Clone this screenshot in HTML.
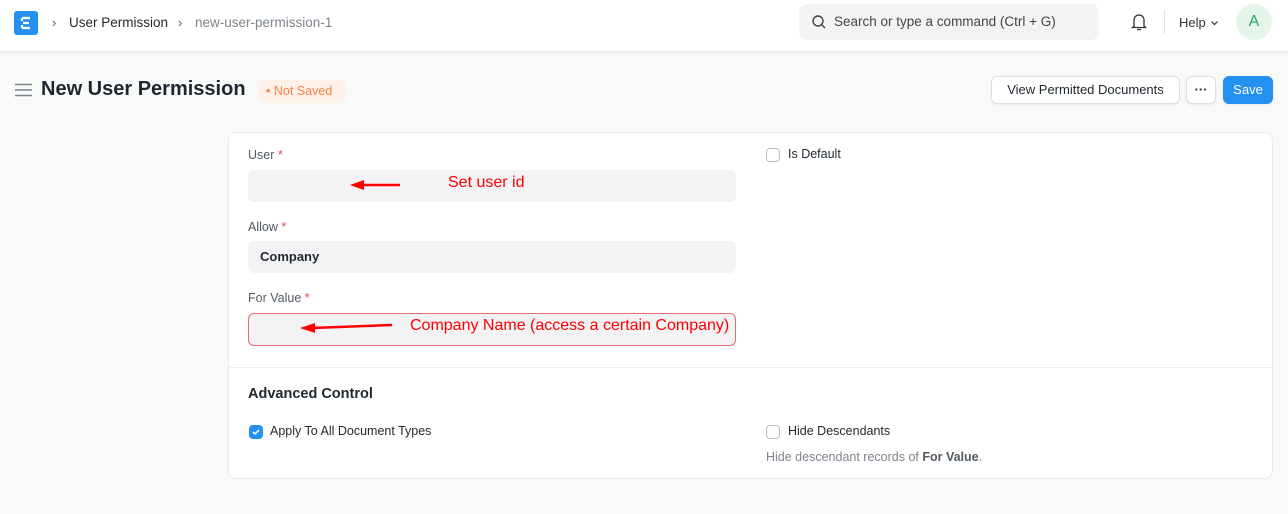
<!DOCTYPE html>
<html><head><style>
*{box-sizing:border-box;margin:0;padding:0}
body{width:1288px;height:514px;background:#f8f9f9;font-family:"Liberation Sans",sans-serif;color:#1f272e;position:relative;overflow:hidden;font-size:13px}
.nav{position:absolute;left:0;top:0;width:1288px;height:52px;background:#fff;border-bottom:1px solid #e8eaec;box-shadow:0 1px 3px rgba(0,0,0,.05)}
.abs{position:absolute}
.card{position:absolute;left:228px;top:132px;width:1045px;height:347px;background:#fff;border:1px solid #e8eaed;border-radius:8px}
.lbl{position:absolute;font-size:12.5px;color:#525a62}
.req{color:#e24c4c}
.inp{position:absolute;left:20px;width:488px;height:32px;background:#f3f3f5;border-radius:6px}
.red{color:#f00;font-size:16px;position:absolute}
.cb{position:absolute;width:14px;height:14px;border:1px solid #b6bcc2;border-radius:4px;background:#fff}
.btn{position:absolute;top:76px;height:28px;border:1px solid #dcdfe3;border-radius:6px;background:#fff;font-size:13px;line-height:26px;text-align:center;box-shadow:0 1px 2px rgba(0,0,0,.06)}
</style></head><body>
<div class="nav">
  <div class="abs" style="left:14px;top:11px;width:24px;height:24px;background:#2490ef;border-radius:3px">
    <svg width="24" height="24"><path d="M8 7h8M9 12h6M8 17h8M8 7v3M8 14v3" stroke="#fff" stroke-width="2.2" fill="none"/></svg>
  </div>
  <div class="abs" style="left:52px;top:15px;font-size:13px;color:#555">›</div>
  <div class="abs" style="left:69px;top:15px;font-size:13.5px;color:#1f272e">User Permission</div>
  <div class="abs" style="left:178px;top:15px;font-size:13px;color:#555">›</div>
  <div class="abs" style="left:195px;top:15px;font-size:13.5px;color:#7c848c">new-user-permission-1</div>
  <div class="abs" style="left:799px;top:4px;width:300px;height:36px;background:#f3f3f5;border-radius:8px">
    <svg class="abs" style="left:12px;top:10px" width="16" height="16"><circle cx="7" cy="7" r="5" stroke="#444" stroke-width="1.4" fill="none"/><path d="M11 11l3 3" stroke="#444" stroke-width="1.4"/></svg>
    <div class="abs" style="left:35px;top:10px;font-size:13.5px;color:#444">Search or type a command (Ctrl + G)</div>
  </div>
  <svg class="abs" style="left:1130px;top:12px" width="18" height="20"><path d="M4 14V8a5 5 0 0110 0v6l1.5 1.5h-13z M7 17.5h4" stroke="#333" stroke-width="1.3" fill="none"/></svg>
  <div class="abs" style="left:1164px;top:10px;width:1px;height:24px;background:#dcdfe3"></div>
  <div class="abs" style="left:1179px;top:15px;font-size:13px;color:#333">Help</div>
  <svg class="abs" style="left:1210px;top:19px" width="10" height="8"><path d="M1.5 2.5l3 3 3-3" stroke="#333" stroke-width="1.2" fill="none"/></svg>
  <div class="abs" style="left:1236px;top:4px;width:36px;height:36px;border-radius:50%;background:#e4f5e9;color:#30a66d;text-align:center;line-height:36px;font-size:16px">A</div>
</div>
<svg class="abs" style="left:15px;top:83px" width="18" height="14"><path d="M0 1.5h17M0 7h17M0 12.5h17" stroke="#7c848c" stroke-width="1.6"/></svg>
<div class="abs" style="left:41px;top:78px;font-size:20px;font-weight:bold;color:#1f272e">New User Permission</div>
<div class="abs" style="left:258px;top:80px;width:88px;height:23px;background:#fff1e7;border-radius:6px;color:#f4844c;font-size:12.5px;line-height:23px;padding-left:8px">• Not Saved</div>
<div class="btn" style="left:991px;width:189px">View Permitted Documents</div>
<div class="btn" style="left:1186px;width:30px;font-weight:bold">···</div>
<div class="btn" style="left:1223px;width:50px;background:#2490ef;border-color:#2490ef;color:#fff">Save</div>
<div class="card">
  <div class="lbl" style="left:19px;top:15px">User <span class="req">*</span></div>
  <div class="inp" style="top:37px;left:19px"></div>
  <svg class="abs" style="left:119px;top:45px" width="55" height="14"><path d="M52 7H12" stroke="#f00" stroke-width="2.5"/><path d="M2 7l14-5v10z" fill="#f00"/></svg>
  <div class="red" style="left:219px;top:41px">Set user id</div>
  <div class="lbl" style="left:19px;top:87px">Allow <span class="req">*</span></div>
  <div class="inp" style="top:108px;left:19px"><div class="abs" style="left:12px;top:8px;font-weight:bold;font-size:13px">Company</div></div>
  <div class="lbl" style="left:19px;top:158px">For Value <span class="req">*</span></div>
  <div class="inp" style="top:180px;left:19px;height:33px;border:1px solid #e76e6e"></div>
  <svg class="abs" style="left:69px;top:186px" width="96" height="16"><path d="M94 6L14 9" stroke="#f00" stroke-width="2.5"/><path d="M2 9l15-5v10z" fill="#f00"/></svg>
  <div class="red" style="left:181px;top:184px">Company Name (access a certain Company)</div>
  <div class="cb" style="left:537px;top:15px"></div>
  <div class="abs" style="left:559px;top:14px;font-size:12.5px;color:#1f272e">Is Default</div>
  <div class="abs" style="left:0;top:234px;width:1043px;height:1px;background:#ebeef0"></div>
  <div class="abs" style="left:19px;top:253px;font-size:14.5px;font-weight:bold">Advanced Control</div>
  <div class="cb" style="left:20px;top:292px;background:#2490ef;border-color:#2490ef"><svg width="12" height="12" style="position:absolute;left:0;top:0"><path d="M3 6l2 2 4-4" stroke="#fff" stroke-width="1.5" fill="none"/></svg></div>
  <div class="abs" style="left:41px;top:291px;font-size:12.5px">Apply To All Document Types</div>
  <div class="cb" style="left:537px;top:292px"></div>
  <div class="abs" style="left:559px;top:291px;font-size:12.5px">Hide Descendants</div>
  <div class="abs" style="left:537px;top:317px;font-size:12.5px;color:#7c848c">Hide descendant records of <b style="color:#525a62">For Value</b>.</div>
</div>
</body></html>
